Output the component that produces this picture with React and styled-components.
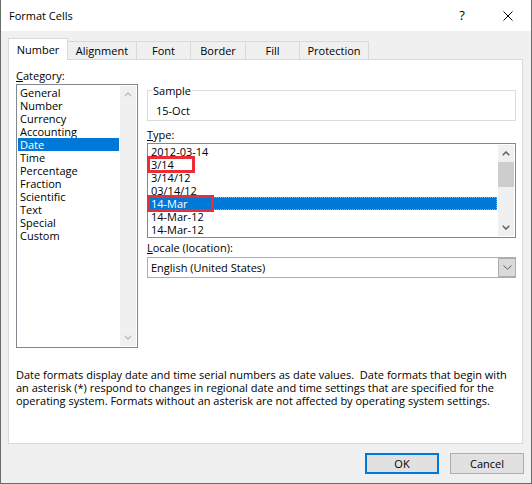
import styled, { createGlobalStyle, css } from "styled-components";

const GlobalStyle = createGlobalStyle`
  html, body {
    margin: 0;
    padding: 0;
    background: #ffffff;
  }
  body {
    font-family: "Open Sans", "Noto Sans", sans-serif;
    font-size: 11px;
    color: #000000;
  }
  * {
    box-sizing: border-box;
  }
`;

const Window = styled.div`
  width: 532px;
  height: 484px;
  background: #f0f0f0;
  border: 1px solid #6b6b6b;
  border-top: none;
  display: flex;
  flex-direction: column;
`;

const TitleBar = styled.div`
  height: 31px;
  flex-shrink: 0;
  background: #ffffff;
  display: flex;
  align-items: center;
`;

const Title = styled.div`
  flex: 1;
  padding-left: 8px;
  line-height: 13px;
`;

const CaptionButton = styled.div`
  width: 46px;
  height: 31px;
  display: flex;
  align-items: center;
  justify-content: center;
  font-size: 13px;
  line-height: 13px;
`;

const Body = styled.div`
  flex: 1;
  display: flex;
  flex-direction: column;
  padding: 7px 7px 0 7px;
`;

const TabStrip = styled.div`
  height: 21px;
  display: flex;
  align-items: flex-end;
`;

const Tab = styled.div`
  position: relative;
  width: ${({ $width }) => $width}px;
  height: 18px;
  margin-left: -1px;
  padding-top: 2px;
  border: 1px solid #d9d9d9;
  border-bottom: none;
  background: #f0f0f0;
  text-align: center;
  line-height: 13px;
  white-space: nowrap;

  &:first-child {
    margin-left: 0;
  }

  ${({ $active }) =>
    $active &&
    css`
      z-index: 1;
      height: 22px;
      margin-bottom: -1px;
      padding-top: 4px;
      background: #ffffff;
    `}
`;

const Panel = styled.div`
  height: 385px;
  margin-right: 1px;
  background: #ffffff;
  border: 1px solid #d9d9d9;
  padding: 9px 6px 0 7px;
  display: flex;
  flex-direction: column;
`;

const Columns = styled.div`
  display: flex;
  gap: 9px;
`;

const LeftColumn = styled.div`
  width: 122px;
  display: flex;
  flex-direction: column;
`;

const RightColumn = styled.div`
  width: 369px;
  display: flex;
  flex-direction: column;
`;

const Label = styled.div`
  line-height: 13px;
  margin-top: ${({ $gap }) => $gap || 0}px;
`;

const ListBox = styled.div`
  height: ${({ $height }) => $height}px;
  margin-top: 2px;
  border: 1px solid #828790;
  padding: 1px;
  background: #ffffff;
  display: flex;
`;

const ListItems = styled.div`
  flex: 1;
`;

const Item = styled.div`
  position: relative;
  height: 13px;
  line-height: 14px;
  padding-left: 2px;
  white-space: nowrap;

  ${({ $selected }) =>
    $selected &&
    css`
      background: #0078d7;
      color: #ffffff;
    `}

  ${({ $focused }) =>
    $focused &&
    css`
      outline: 1px dotted #f59a3c;
      outline-offset: -1px;
    `}

  ${({ $mark }) =>
    $mark &&
    css`
      &::after {
        content: "";
        position: absolute;
        left: -2px;
        top: -2px;
        bottom: -2px;
        width: ${$mark}px;
        border: 3px solid #ea2d36;
      }
    `}
`;

const ScrollBar = styled.div`
  width: 16px;
  margin-left: 1px;
  background: #f0f0f0;
  display: flex;
  flex-direction: column;
`;

const ScrollButton = styled.div`
  height: 17px;
  display: flex;
  align-items: center;
  justify-content: center;
`;

const Thumb = styled.div`
  height: 25px;
  background: #cdcdcd;
`;

const Track = styled.div`
  flex: 1;
`;

const GroupBox = styled.div`
  margin-top: 21px;
  border: 1px solid #dcdcdc;
  padding: 0 0 3px 8px;
`;

const Legend = styled.div`
  width: fit-content;
  margin: -7px 0 0 -4px;
  padding: 0 1px;
  background: #ffffff;
  line-height: 13px;
`;

const SampleValue = styled.div`
  margin-top: 7px;
  line-height: 13px;
`;

const Combo = styled.div`
  height: 21px;
  margin-top: 3px;
  border: 1px solid #adadad;
  background: #ffffff;
  display: flex;
  align-items: stretch;
`;

const ComboText = styled.div`
  flex: 1;
  padding-left: 3px;
  display: flex;
  align-items: center;
  line-height: 13px;
`;

const ComboButton = styled.div`
  width: 17px;
  border: 1px solid #adadad;
  border-right: none;
  background: #dadada;
  display: flex;
  align-items: center;
  justify-content: center;
`;

const Description = styled.div`
  margin-top: 20px;
  line-height: 13px;
  white-space: pre;
`;

const Footer = styled.div`
  display: flex;
  justify-content: flex-end;
  gap: 11px;
  padding-top: 9px;
`;

const Button = styled.div`
  width: 74px;
  height: 21px;
  background: #e1e1e1;
  border: ${({ $default }) => ($default ? "2px solid #0078d7" : "1px solid #adadad")};
  display: flex;
  align-items: center;
  justify-content: center;
  line-height: 13px;
`;

function Arrow({ dir, color }) {
  const points = dir === "up" ? "0.7,4.3 4,1 7.3,4.3" : "0.7,0.7 4,4 7.3,0.7";
  return (
    <svg width="8" height="5" viewBox="0 0 8 5">
      <polyline points={points} fill="none" stroke={color} strokeWidth="1.5" />
    </svg>
  );
}

function CloseIcon() {
  return (
    <svg width="10" height="10" viewBox="0 0 10 10">
      <path d="M0.5 0.5 L9.5 9.5 M9.5 0.5 L0.5 9.5" stroke="#000" strokeWidth="1" fill="none" />
    </svg>
  );
}

function ComboChevron() {
  return (
    <svg width="9" height="5" viewBox="0 0 9 5">
      <polyline points="0.5,0.5 4.5,4.3 8.5,0.5" fill="none" stroke="#606060" strokeWidth="1" />
    </svg>
  );
}

const tabs = [
  { name: "Number", width: 60 },
  { name: "Alignment", width: 70 },
  { name: "Font", width: 55 },
  { name: "Border", width: 56 },
  { name: "Fill", width: 55 },
  { name: "Protection", width: 70 },
];

const categories = [
  "General",
  "Number",
  "Currency",
  "Accounting",
  "Date",
  "Time",
  "Percentage",
  "Fraction",
  "Scientific",
  "Text",
  "Special",
  "Custom",
];

const types = [
  { text: "2012-03-14" },
  { text: "3/14", mark: 42 },
  { text: "3/14/12" },
  { text: "03/14/12" },
  { text: "14-Mar", mark: 61, selected: true },
  { text: "14-Mar-12" },
  { text: "14-Mar-12" },
];

const description =
  "Date formats display date and time serial numbers as date values.  Date formats that begin with\n" +
  "an asterisk (*) respond to changes in regional date and time settings that are specified for the\n" +
  "operating system. Formats without an asterisk are not affected by operating system settings.";

export default function App() {
  return (
    <>
      <GlobalStyle />
      <Window>
        <TitleBar>
          <Title>Format Cells</Title>
          <CaptionButton>?</CaptionButton>
          <CaptionButton>
            <CloseIcon />
          </CaptionButton>
        </TitleBar>
        <Body>
          <TabStrip>
            {tabs.map((t, i) => (
              <Tab key={t.name} $width={t.width} $active={i === 0}>
                {t.name}
              </Tab>
            ))}
          </TabStrip>
          <Panel>
            <Columns>
              <LeftColumn>
                <Label>
                  <u>C</u>ategory:
                </Label>
                <ListBox $height={264}>
                  <ListItems>
                    {categories.map((c) => (
                      <Item key={c} $selected={c === "Date"}>
                        {c}
                      </Item>
                    ))}
                  </ListItems>
                  <ScrollBar>
                    <ScrollButton>
                      <Arrow dir="up" color="#c0c0c0" />
                    </ScrollButton>
                    <Track />
                    <ScrollButton>
                      <Arrow dir="down" color="#c0c0c0" />
                    </ScrollButton>
                  </ScrollBar>
                </ListBox>
              </LeftColumn>
              <RightColumn>
                <GroupBox>
                  <Legend>Sample</Legend>
                  <SampleValue>15-Oct</SampleValue>
                </GroupBox>
                <Label $gap={7}>
                  <u>T</u>ype:
                </Label>
                <ListBox $height={95}>
                  <ListItems>
                    {types.map((t, i) => (
                      <Item key={i} $selected={t.selected} $focused={t.selected} $mark={t.mark}>
                        {t.text}
                      </Item>
                    ))}
                  </ListItems>
                  <ScrollBar>
                    <ScrollButton>
                      <Arrow dir="up" color="#606060" />
                    </ScrollButton>
                    <Thumb />
                    <Track />
                    <ScrollButton>
                      <Arrow dir="down" color="#606060" />
                    </ScrollButton>
                  </ScrollBar>
                </ListBox>
                <Label $gap={3}>
                  <u>L</u>ocale (location):
                </Label>
                <Combo>
                  <ComboText>English (United States)</ComboText>
                  <ComboButton>
                    <ComboChevron />
                  </ComboButton>
                </Combo>
              </RightColumn>
            </Columns>
            <Description>{description}</Description>
          </Panel>
          <Footer>
            <Button $default>OK</Button>
            <Button>Cancel</Button>
          </Footer>
        </Body>
      </Window>
    </>
  );
}
